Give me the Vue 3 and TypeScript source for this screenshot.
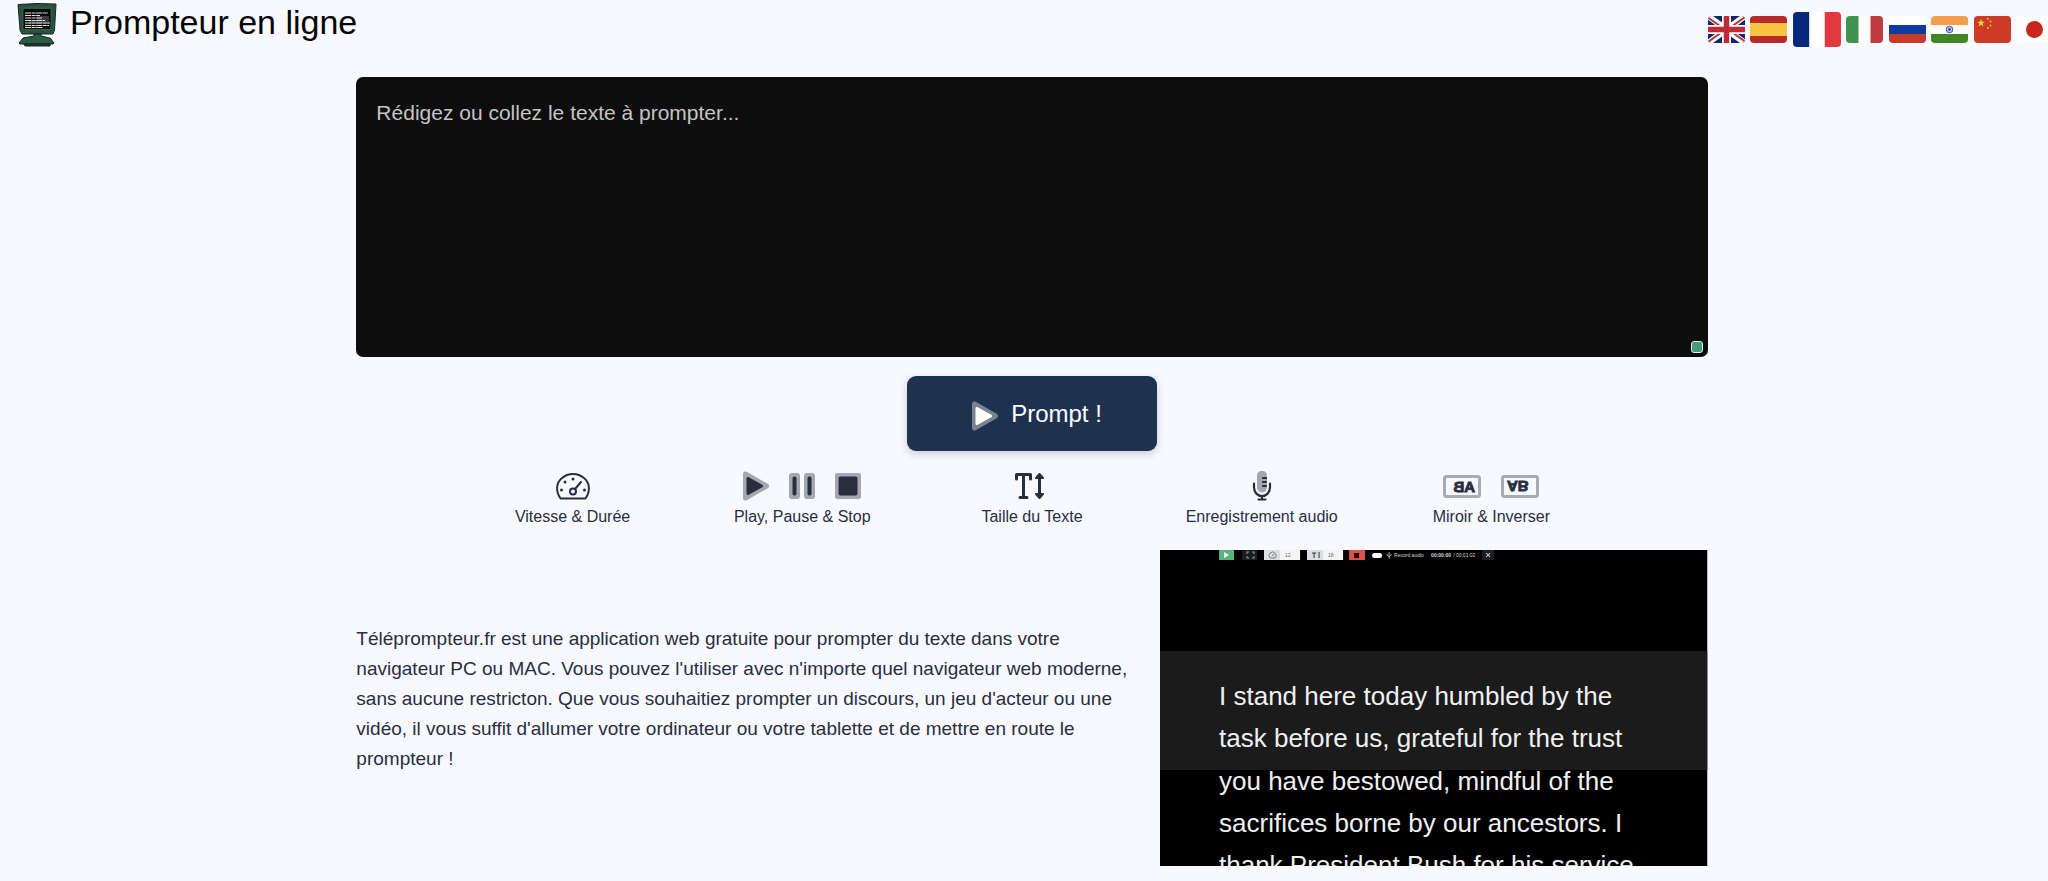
<script setup lang="ts">
import { ref } from 'vue'

interface Language {
  code: string
  label: string
}

const languages: Language[] = [
  { code: 'en', label: 'English' },
  { code: 'es', label: 'Español' },
  { code: 'fr', label: 'Français' },
  { code: 'it', label: 'Italiano' },
  { code: 'ru', label: 'Русский' },
  { code: 'hi', label: 'हिन्दी' },
  { code: 'zh', label: '中文' },
  { code: 'ja', label: '日本語' },
]

const script = ref('')
const current = ref('fr')
</script>

<template>
  <div class="page">
    <header class="header">
      <a class="brand" href="#">
        <svg class="logo" viewBox="0 0 40 44" aria-hidden="true">
          <path d="M1 1.500 20 .5 39 1 37.500 27 36 31H5L3 27Z" fill="#2d5a45" stroke="#17231d" />
          <path d="M3 3 20 2 37 3 35 27 33 29H7L5 27Z" fill="none" stroke="#24483a" />
          <path d="M17 31h7v2l9 2 4 5-1 1H3l-1-1 4-5 11-2Z" fill="#2d5a45" stroke="#17231d" />
          <path d="M7 41h26v2H8Z" fill="#1f4031" stroke="#17231d" />
          <rect x="6.500" y="6" width="27" height="20" rx="1" fill="#080808" />
          <path d="M20 15h12M12 19h20" stroke="#3a3a3a" stroke-width="4" />
          <path d="M8 10h23M8 12.500h15M8 15h17M8 17.500h20M8 20h25M8 22.500h24M8 24.500h18" stroke="#ddd" stroke-width="1.200" stroke-dasharray="6 .6 4 .5" />
        </svg>
        <h1>Prompteur en ligne</h1>
      </a>
      <nav class="languages" aria-label="Langues">
        <a
          v-for="lang in languages"
          :key="lang.code"
          href="#"
          class="flag"
          :class="{ active: lang.code === current }"
          :aria-label="lang.label"
          @click.prevent="current = lang.code"
        >
          <svg viewBox="0 0 37 27" aria-hidden="true">
            <template v-if="lang.code === 'en'">
              <path d="M0 0h37v27H0Z" fill="#0b2a6b" />
              <path d="m0 0 37 27M37 0 0 27" stroke="#fff" stroke-width="6" />
              <path d="m0 1.500 14 10M37 25.500l-14-10M37 1l-14 10M0 26l14-10" stroke="#c32f3a" stroke-width="2" />
              <path d="M18.500 0v27M0 13.500h37" stroke="#fff" stroke-width="9" />
              <path d="M18.500 0v27M0 13.500h37" stroke="#bf2c38" stroke-width="5.500" />
            </template>
            <template v-else-if="lang.code === 'es'">
              <path d="M0 0h37v27H0Z" fill="#b92b2b" />
              <path d="M0 7h37v13H0Z" fill="#f9c440" />
            </template>
            <template v-else-if="lang.code === 'fr'">
              <path d="M0 0h13v27H0Z" fill="#05297a" />
              <path d="M12.500 0h12v27h-12Z" fill="#fff" />
              <path d="M24.500 0H37v27H24.500Z" fill="#e1393d" />
            </template>
            <template v-else-if="lang.code === 'it'">
              <path d="M0 0h13v27H0Z" fill="#41924f" />
              <path d="M12.500 0h12v27h-12Z" fill="#fff" />
              <path d="M24.500 0H37v27H24.500Z" fill="#be3b40" />
            </template>
            <template v-else-if="lang.code === 'ru'">
              <path d="M0 0h37v9H0Z" fill="#fff" />
              <path d="M0 9h37v9H0Z" fill="#103a9e" />
              <path d="M0 18h37v9H0Z" fill="#c53b2c" />
            </template>
            <template v-else-if="lang.code === 'hi'">
              <path d="M0 0h37v9H0Z" fill="#f49d4b" />
              <path d="M0 9h37v9H0Z" fill="#fff" />
              <path d="M0 18h37v9H0Z" fill="#3f8625" />
              <circle cx="18.500" cy="13.500" r="3.300" fill="#c3c3e6" stroke="#4a4aa8" />
              <circle cx="18.500" cy="13.500" r="1.300" fill="#34349a" />
            </template>
            <template v-else-if="lang.code === 'zh'">
              <path d="M0 0h37v27H0Z" fill="#cd3a25" />
              <path d="m7 2.800 1 2.900h3L8.600 7.500l.9 3L7 8.700l-2.500 1.800.9-3L3 5.700h3Z" fill="#fbd43f" />
              <g fill="#f3b83a">
                <circle cx="13.800" cy="2.800" r="1" />
                <circle cx="16.500" cy="5.500" r="1" />
                <circle cx="16.500" cy="9.500" r="1" />
                <circle cx="13.800" cy="12" r="1" />
              </g>
            </template>
            <template v-else>
              <path d="M0 0h37v27H0Z" fill="#fff" />
              <circle cx="18.500" cy="13.500" r="8.500" fill="#c6281c" />
            </template>
          </svg>
        </a>
      </nav>
    </header>

    <div class="content">
      <main class="main">
        <div class="editor">
          <textarea v-model="script" aria-label="Texte à prompter" placeholder="Rédigez ou collez le texte à prompter..."></textarea>
          <span class="grip"></span>
        </div>

        <button class="start" type="button">
          <svg class="icon" viewBox="0 0 30 30" aria-hidden="true">
            <path class="halo" d="M4.500 3v24l21-12Z" stroke-width="5" />
            <path class="solid" d="M7 7.500v15L20.500 15Z" stroke-width="3" />
          </svg>
          <span>Prompt !</span>
        </button>

        <ul class="features">
          <li>
            <div class="icons">
              <svg class="gauge" viewBox="0 0 36 30" aria-hidden="true">
                <path d="M5.500 27.500C.5 20 1 12 7 7c6-5.500 16-5.500 22 0 6 5 6.500 13 1.500 20.500Z" fill="none" stroke="currentColor" stroke-width="2" stroke-linejoin="round" />
                <circle cx="18" cy="20.500" r="3" fill="none" stroke="currentColor" stroke-width="2" />
                <path d="m20 18 6-7" stroke="currentColor" stroke-width="2" stroke-linecap="round" />
                <g fill="currentColor">
                  <circle cx="18" cy="8" r="1.500" />
                  <circle cx="10" cy="11" r="1.500" />
                  <circle cx="6.500" cy="19" r="1.500" />
                  <circle cx="29.500" cy="19" r="1.500" />
                </g>
              </svg>
            </div>
            <span>Vitesse &amp; Durée</span>
          </li>
          <li>
            <div class="icons">
              <svg class="icon" viewBox="0 0 30 30" aria-hidden="true">
                <path class="halo" d="M4.500 3v24l21-12Z" stroke-width="5" />
                <path class="solid" d="M7 7.500v15L20.500 15Z" stroke-width="3" />
              </svg>
              <svg class="icon" viewBox="0 0 30 30" aria-hidden="true">
                <g class="halo" stroke="none">
                  <rect x="2.500" y="2.500" width="10" height="25" rx="2" />
                  <rect x="17.500" y="2.500" width="10" height="25" rx="2" />
                </g>
                <rect class="solid" x="6" y="6" width="3" height="18" rx="1" />
                <rect class="solid" x="21" y="6" width="3" height="18" rx="1" />
              </svg>
              <svg class="icon" viewBox="0 0 30 30" aria-hidden="true">
                <rect class="halo" x="3" y="3" width="24" height="24" rx="1" stroke-width="2" />
                <rect class="solid" x="6" y="6" width="18" height="18" rx="1" />
              </svg>
            </div>
            <span>Play, Pause &amp; Stop</span>
          </li>
          <li>
            <div class="icons">
              <svg class="gauge" viewBox="0 0 36 30" aria-hidden="true">
                <path d="M2.500 8V3.500h14V8M9.500 3.500v23M6 26.500h7" fill="none" stroke="currentColor" stroke-width="3" stroke-linecap="round" stroke-linejoin="round" />
                <path d="M25.500 6v18" stroke="currentColor" stroke-width="3" />
                <path d="m25.500 3 3.500 4h-7ZM25.500 27l3.500-4h-7Z" fill="currentColor" stroke="currentColor" stroke-width="2" stroke-linejoin="round" />
              </svg>
            </div>
            <span>Taille du Texte</span>
          </li>
          <li>
            <div class="icons">
              <svg class="icon" viewBox="0 0 30 30" aria-hidden="true">
                <rect class="halo" x="10.500" y="0" width="9" height="21" rx="4.500" stroke="none" />
                <path d="M7 12.500v4c0 5 3.500 8.500 8 8.500s8-3.500 8-8.500v-4M15 25v3.500M11.500 28.500h7M16 7h3M16 11h3M16 15h3" fill="none" stroke="currentColor" stroke-width="2.200" stroke-linecap="round" />
              </svg>
            </div>
            <span>Enregistrement audio</span>
          </li>
          <li>
            <div class="icons wide">
              <svg class="card" viewBox="0 0 38 30" aria-hidden="true">
                <rect class="frame" x="1.500" y="5.500" width="35" height="20" rx="2" />
                <text transform="translate(32 21) scale(-1 1)">AB</text>
              </svg>
              <svg class="card" viewBox="0 0 38 30" aria-hidden="true">
                <rect class="frame" x="1.500" y="5.500" width="35" height="20" rx="2" />
                <text transform="translate(6 10) scale(1 -1)">AB</text>
              </svg>
            </div>
            <span>Miroir &amp; Inverser</span>
          </li>
        </ul>

        <section class="intro">
          <p>
            Téléprompteur.fr est une application web gratuite pour prompter du texte dans votre navigateur PC ou MAC. Vous
            pouvez l'utiliser avec n'importe quel navigateur web moderne, sans aucune restricton. Que vous souhaitiez
            prompter un discours, un jeu d'acteur ou une vidéo, il vous suffit d'allumer votre ordinateur ou votre tablette
            et de mettre en route le prompteur !
          </p>
          <svg class="preview" viewBox="0 0 547 316" role="img" aria-label="Aperçu du prompteur">
            <path d="M0 0h547v316H0Z" fill="#000" />
            <path d="M0 101h547v119H0Z" fill="#1b1b1c" />
            <g class="toolbar">
              <path d="M59 0h15v10H59Z" fill="#57b478" />
              <path d="m64 2 5 3-5 3Z" fill="#fff" />
              <path d="M82 0h15v10H82ZM322 0h12v10h-12Z" fill="#1c1d20" />
              <path d="M87 4V2h2M92 2h2v2M94 6v2h-2M89 8h-2V6" fill="none" stroke="#999" />
              <path d="M104 0h36v10h-36ZM147 0h36v10h-36Z" fill="#f4f4f4" />
              <path d="M104 0h16v10h-16ZM147 0h16v10h-16Z" fill="#dcdde0" />
              <path d="M110 8a3.500 3.500 0 1 1 5 0ZM112 6l2-2" fill="none" stroke="#666" stroke-width=".8" />
              <path d="M152 3h4M154 3v5M159 2v6" fill="none" stroke="#333" />
              <text class="value" x="125" y="7">12</text>
              <text class="value" x="168" y="7">18</text>
              <path d="M189 0h16v10h-16Z" fill="#d9534f" />
              <path d="M194 3h5v5h-5Z" fill="#200" />
              <rect x="212" y="3" width="10" height="5" rx="2.500" fill="#fff" />
              <path d="M229 2v5M227 4v1q2 3 4 0V4M229 7v2" fill="none" stroke="#ccc" stroke-width=".8" />
              <text x="234" y="7">Record audio</text>
              <text x="271" y="7" font-weight="bold">00:00:00</text>
              <text x="293" y="7">/ 00:01:02</text>
              <path d="m326 3 4 4m0-4-4 4" stroke="#ddd" />
            </g>
            <g class="speech">
              <text x="59" y="155">I stand here today humbled by the</text>
              <text x="59" y="197">task before us, grateful for the trust</text>
              <text x="59" y="240">you have bestowed, mindful of the</text>
              <text x="59" y="282">sacrifices borne by our ancestors. I</text>
              <text x="59" y="324">thank President Bush for his service</text>
            </g>
          </svg>
        </section>
      </main>
    </div>
  </div>
</template>

<style>
body {
  margin: 0;
  background: #f8f9fe;
}
</style>

<style scoped>
.page {
  overflow: hidden;
  color: #282e3e;
  font-family: "Liberation Sans", Arial, sans-serif;
  font-size: 16px;
}
.header {
  display: flex;
  align-items: flex-start;
  justify-content: space-between;
  min-height: 77px;
}
.brand {
  display: flex;
  align-items: flex-start;
  gap: 13px;
  padding: 3px 0 0 17px;
  color: #050505;
  text-decoration: none;
}
.logo {
  width: 40px;
  height: 44px;
}
h1 {
  margin: 0;
  font-size: 34px;
  font-weight: 400;
  line-height: 38px;
}
.languages {
  display: flex;
  align-items: center;
  justify-content: space-between;
  width: 345px;
  height: 36px;
  margin: 11px -5px 0 0;
}
.flag {
  width: 37px;
  height: 27px;
  overflow: hidden;
  border-radius: 4px;
}
.flag.active {
  width: 48px;
  height: 35px;
}
.flag svg {
  display: block;
  width: 100%;
  height: 100%;
}
.content {
  padding-left: 16px;
}
.main {
  display: flex;
  flex-direction: column;
  align-items: center;
  width: 66.5%;
  margin: 0 auto;
}
.editor {
  position: relative;
  width: 100%;
}
textarea {
  display: block;
  box-sizing: border-box;
  width: 100%;
  height: 280px;
  padding: 21px 20px;
  border: 0;
  border-radius: 7px;
  background: #0d0d0d;
  color: #fff;
  font: 21px/30px "Liberation Sans", Arial, sans-serif;
  resize: none;
}
textarea::placeholder {
  color: #c4c4c4;
  opacity: 1;
}
.grip {
  position: absolute;
  right: 5px;
  bottom: 4px;
  box-sizing: border-box;
  width: 12px;
  height: 12px;
  border: 1px solid #e8eeeb;
  border-radius: 3px;
  background: #449d78;
}
.start {
  display: flex;
  align-items: center;
  justify-content: center;
  gap: 11px;
  box-sizing: border-box;
  width: 250px;
  height: 75px;
  margin-top: 19px;
  padding: 0 0 0 8px;
  border: 0;
  border-radius: 9px;
  background: #1e3250;
  box-shadow: 0 3px 8px rgb(30 35 70 / 20%);
  color: #fff;
  font: 24px/30px "Liberation Sans", Arial, sans-serif;
}
.start .icon {
  margin-top: 4px;
}
.icon {
  width: 30px;
  height: 30px;
}
.halo {
  fill: currentColor;
  stroke: currentColor;
  stroke-linejoin: round;
  opacity: 0.4;
}
.solid {
  fill: currentColor;
  stroke: currentColor;
  stroke-linejoin: round;
}
.features {
  display: grid;
  grid-template-columns: repeat(5, 1fr);
  width: 85%;
  margin: 19px 0 21px;
  padding: 0;
  list-style: none;
  line-height: 24px;
  text-align: center;
}
.icons {
  display: flex;
  align-items: center;
  justify-content: center;
  gap: 16px;
  height: 32px;
  margin-bottom: 3px;
}
.icons.wide {
  gap: 20px;
}
.gauge {
  width: 36px;
  height: 30px;
}
.card {
  width: 38px;
  height: 30px;
}
.card text {
  fill: currentColor;
  stroke: currentColor;
  stroke-width: 0.9px;
  font-size: 15px;
  font-weight: 700;
}
.frame {
  fill: none;
  stroke: #a9abb4;
  stroke-width: 3px;
}
.intro {
  display: flex;
  align-items: center;
  width: 100%;
}
.intro p {
  flex: 1;
  margin: 0 0 18px;
  padding-right: 24px;
  font-size: 19px;
  line-height: 30px;
}
.preview {
  flex: none;
  width: 40.5%;
  height: auto;
}
.toolbar text {
  fill: #d8d8d8;
  font-size: 5px;
}
.toolbar .value {
  fill: #666;
}
.speech {
  fill: #f0f0f0;
  font-size: 26px;
}
</style>
